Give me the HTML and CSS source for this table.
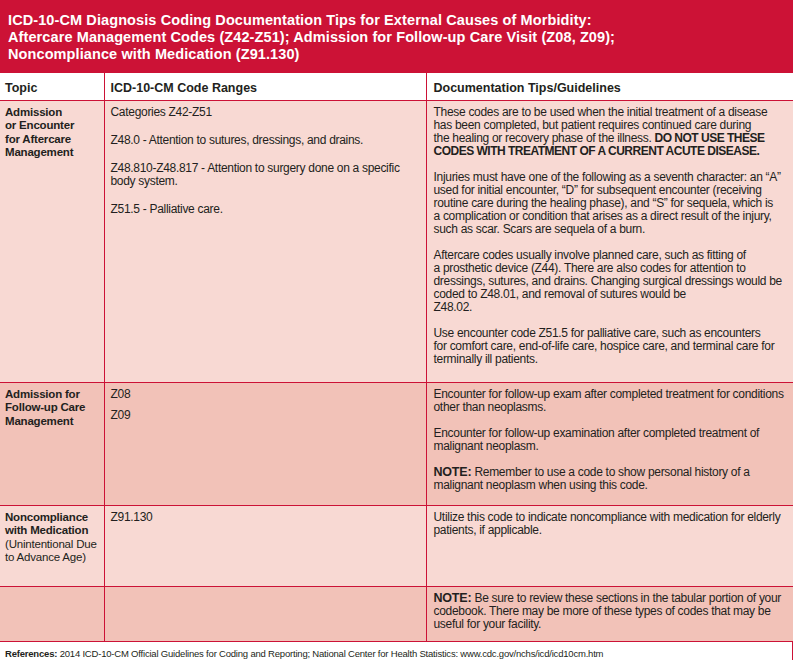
FILE: index.html
```html
<!DOCTYPE html>
<html>
<head>
<meta charset="utf-8">
<link rel="stylesheet" href="styles.css">
</head>
<body>
<div class="sheet">
  <header class="title">
    <h1>ICD-10-CM Diagnosis Coding Documentation Tips for External Causes of Morbidity:<br>Aftercare Management Codes (Z42-Z51); Admission for Follow-up Care Visit (Z08, Z09);<br>Noncompliance with Medication (Z91.130)</h1>
  </header>
  <table class="grid">
    <colgroup>
      <col class="c1"><col class="c2"><col class="c3">
    </colgroup>
    <thead>
      <tr class="head">
        <th>Topic</th>
        <th>ICD-10-CM Code Ranges</th>
        <th>Documentation Tips/Guidelines</th>
      </tr>
    </thead>
    <tbody>
      <tr class="r1 light">
        <td class="topic">Admission<br>or Encounter<br>for Aftercare<br>Management</td>
        <td class="codes">
          <p>Categories Z42-Z51</p>
          <p>Z48.0 - Attention to sutures, dressings, and drains.</p>
          <p>Z48.810-Z48.817 - Attention to surgery done on a specific<br>body system.</p>
          <p>Z51.5 - Palliative care.</p>
        </td>
        <td class="tips">
          <p>These codes are to be used when the initial treatment of a disease<br>has been completed, but patient requires continued care during<br>the healing or recovery phase of the illness. <b>DO NOT USE THESE<br>CODES WITH TREATMENT OF A CURRENT ACUTE DISEASE.</b></p>
          <p>Injuries must have one of the following as a seventh character: an “A”<br>used for initial encounter, “D” for subsequent encounter (receiving<br>routine care during the healing phase), and “S” for sequela, which is<br>a complication or condition that arises as a direct result of the injury,<br>such as scar. Scars are sequela of a burn.</p>
          <p>Aftercare codes usually involve planned care, such as fitting of<br>a prosthetic device (Z44). There are also codes for attention to<br>dressings, sutures, and drains. Changing surgical dressings would be<br>coded to Z48.01, and removal of sutures would be<br>Z48.02.</p>
          <p>Use encounter code Z51.5 for palliative care, such as encounters<br>for comfort care, end-of-life care, hospice care, and terminal care for<br>terminally ill patients.</p>
        </td>
      </tr>
      <tr class="r2 dark">
        <td class="topic">Admission for<br>Follow-up Care<br>Management</td>
        <td class="codes short">
          <p>Z08</p>
          <p>Z09</p>
        </td>
        <td class="tips">
          <p>Encounter for follow-up exam after completed treatment for conditions<br>other than neoplasms.</p>
          <p>Encounter for follow-up examination after completed treatment of<br>malignant neoplasm.</p>
          <p><b class="note">NOTE:</b> Remember to use a code to show personal history of a<br>malignant neoplasm when using this code.</p>
        </td>
      </tr>
      <tr class="r3 light">
        <td class="topic">Noncompliance<br>with Medication<br><span class="sub">(Unintentional Due<br>to Advance Age)</span></td>
        <td class="codes"><p>Z91.130</p></td>
        <td class="tips"><p>Utilize this code to indicate noncompliance with medication for elderly<br>patients, if applicable.</p></td>
      </tr>
      <tr class="r4 dark">
        <td></td>
        <td></td>
        <td class="tips"><p><b class="note">NOTE:</b> Be sure to review these sections in the tabular portion of your<br>codebook. There may be more of these types of codes that may be<br>useful for your facility.</p></td>
      </tr>
    </tbody>
  </table>
  <footer class="refs"><b>References:</b> 2014 ICD-10-CM Official Guidelines for Coding and Reporting; National Center for Health Statistics: www.cdc.gov/nchs/icd/icd10cm.htm</footer>
</div>
</body>
</html>
```

FILE: styles.css
```css
html, body {
  margin: 0;
  padding: 0;
  background: #ffffff;
}

body {
  font-family: "Liberation Sans", Arial, sans-serif;
  color: #231f20;
}

.sheet {
  width: 793px;
}

.title {
  background: #cc1236;
  height: 73px;
  box-sizing: border-box;
  padding: 12px 8px 0 8px;
}

.title h1 {
  margin: 0;
  color: #ffffff;
  font-size: 14.5px;
  line-height: 17px;
  font-weight: bold;
  letter-spacing: 0.1px;
}

.grid {
  width: 793px;
  border-collapse: collapse;
  table-layout: fixed;
}

.c1 { width: 104px; }
.c2 { width: 322px; }
.c3 { width: 367px; }

.grid th,
.grid td {
  border-right: 1px solid #cc1236;
  border-bottom: 1px solid #cc1236;
  vertical-align: top;
  text-align: left;
  padding: 0;
}

.grid th {
  background: #ffffff;
  font-size: 12.5px;
  font-weight: bold;
  height: 27px;
  box-sizing: border-box;
  padding: 8px 0 0 5px;
  line-height: 14px;
}

.grid th:nth-child(2) { padding-left: 6px; }
.grid th:nth-child(3) { padding-left: 7px; }

.light td { background: #f8d9d3; }
.dark td { background: #f2c2b8; }

.r1 td { height: 276px; }
.r2 td { height: 117px; }
.r3 td { height: 75px; }
.r4 td { height: 49px; }

.grid p {
  margin: 0;
}

.topic {
  font-size: 11.5px;
  font-weight: bold;
  line-height: 13.6px;
  letter-spacing: -0.2px;
  padding: 5px 0 0 5px !important;
}

.topic .sub {
  font-weight: normal;
}

.codes {
  font-size: 12px;
  line-height: 13px;
  letter-spacing: -0.3px;
  padding: 5px 6px 0 6px !important;
}

.codes p + p {
  margin-top: 15px;
}

.codes.short p + p {
  margin-top: 8px;
}

.tips {
  font-size: 12px;
  line-height: 13px;
  letter-spacing: -0.3px;
  white-space: nowrap;
  padding: 5px 4px 0 7px !important;
}

.tips p + p {
  margin-top: 13px;
}

.tips b {
  letter-spacing: -0.5px;
}

.tips b.note {
  letter-spacing: -0.2px;
}

.note {
  font-size: 12.5px;
}

.refs {
  border-bottom: 1px solid #cc1236;
  border-right: 1px solid #cc1236;
  height: 22px;
  box-sizing: border-box;
  padding: 6px 0 0 5px;
  font-size: 9.5px;
  line-height: 11px;
  letter-spacing: -0.2px;
  white-space: nowrap;
}
```
